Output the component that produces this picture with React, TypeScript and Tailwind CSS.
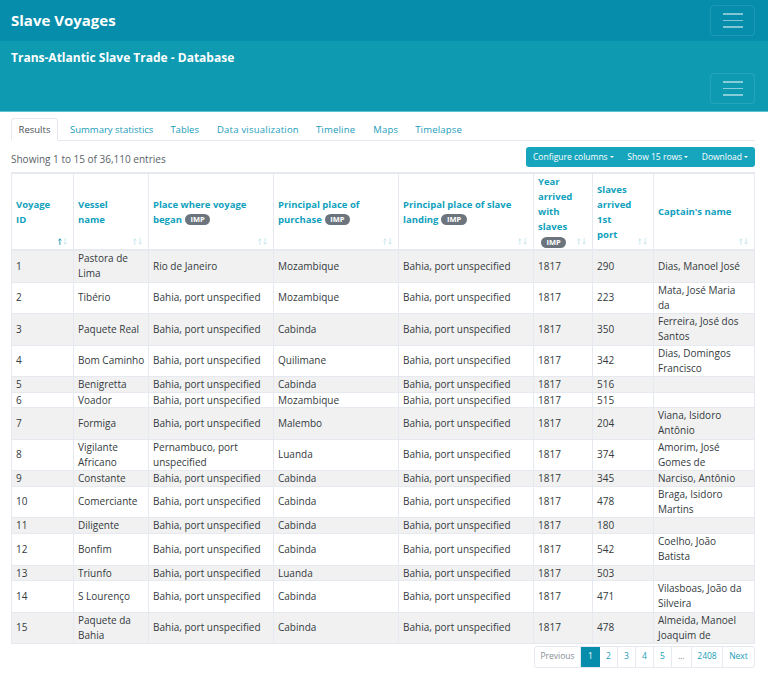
const rows = [
  { id: 1, vessel: 'Pastora de Lima', began: 'Rio de Janeiro', purchase: 'Mozambique', arrived: 290, captain: 'Dias, Manoel José', h: 'h-[32px]' },
  { id: 2, vessel: 'Tibério', began: 'Bahia, port unspecified', purchase: 'Mozambique', arrived: 223, captain: 'Mata, José Maria da', h: 'h-[31px]' },
  { id: 3, vessel: 'Paquete Real', began: 'Bahia, port unspecified', purchase: 'Cabinda', arrived: 350, captain: 'Ferreira, José dos Santos', h: 'h-[32px]' },
  { id: 4, vessel: 'Bom Caminho', began: 'Bahia, port unspecified', purchase: 'Quilimane', arrived: 342, captain: 'Dias, Domingos Francisco', h: 'h-[31px]' },
  { id: 5, vessel: 'Benigretta', began: 'Bahia, port unspecified', purchase: 'Cabinda', arrived: 516, captain: '', h: 'h-[16px]', single: true },
  { id: 6, vessel: 'Voador', began: 'Bahia, port unspecified', purchase: 'Mozambique', arrived: 515, captain: '', h: 'h-[15px]', single: true },
  { id: 7, vessel: 'Formiga', began: 'Bahia, port unspecified', purchase: 'Malembo', arrived: 204, captain: 'Viana, Isidoro Antônio', h: 'h-[32px]' },
  { id: 8, vessel: 'Vigilante Africano', began: 'Pernambuco, port unspecified', purchase: 'Luanda', arrived: 374, captain: 'Amorim, José Gomes de', h: 'h-[31px]' },
  { id: 9, vessel: 'Constante', began: 'Bahia, port unspecified', purchase: 'Cabinda', arrived: 345, captain: 'Narciso, Antônio', h: 'h-[16px]', single: true },
  { id: 10, vessel: 'Comerciante', began: 'Bahia, port unspecified', purchase: 'Cabinda', arrived: 478, captain: 'Braga, Isidoro Martins', h: 'h-[31px]' },
  { id: 11, vessel: 'Diligente', began: 'Bahia, port unspecified', purchase: 'Cabinda', arrived: 180, captain: '', h: 'h-[16px]', single: true },
  { id: 12, vessel: 'Bonfim', began: 'Bahia, port unspecified', purchase: 'Cabinda', arrived: 542, captain: 'Coelho, João Batista', h: 'h-[32px]' },
  { id: 13, vessel: 'Triunfo', began: 'Bahia, port unspecified', purchase: 'Luanda', arrived: 503, captain: '', h: 'h-[15px]', single: true },
  { id: 14, vessel: 'S Lourenço', began: 'Bahia, port unspecified', purchase: 'Cabinda', arrived: 471, captain: 'Vilasboas, João da Silveira', h: 'h-[32px]' },
  { id: 15, vessel: 'Paquete da Bahia', began: 'Bahia, port unspecified', purchase: 'Cabinda', arrived: 478, captain: 'Almeida, Manoel Joaquim de', h: 'h-[31px]' },
];

const tabs = [
  { label: 'Summary statistics', cls: 'ml-[12px]' },
  { label: 'Tables', cls: 'ml-[17px]' },
  { label: 'Data visualization', cls: 'ml-[18px] tracking-[0.22px]' },
  { label: 'Timeline', cls: 'ml-[17px] tracking-[0.2px]' },
  { label: 'Maps', cls: 'ml-[18px] tracking-[0.2px]' },
  { label: 'Timelapse', cls: 'ml-[17px] tracking-[0.2px]' },
];

const headers = [
  { label: 'Voyage\nID', imp: false, w: 'w-[62px]', active: true },
  { label: 'Vessel\nname', imp: false, w: 'w-[75px]' },
  { label: 'Place where voyage\nbegan', imp: true, w: 'w-[125px]' },
  { label: 'Principal place of\npurchase', imp: true, w: 'w-[125px]' },
  { label: 'Principal place of slave\nlanding', imp: true, w: 'w-[135px]' },
  { label: 'Year\narrived\nwith\nslaves\n', imp: true, w: 'w-[59px]' },
  { label: 'Slaves\narrived\n1st\nport', imp: false, w: 'w-[61px]' },
  { label: "Captain's name", imp: false, w: 'w-[101px]' },
];

function Burger() {
  return (
    <button className="flex h-[31px] w-[45px] flex-col items-center justify-center gap-[5px] rounded border border-white/10">
      <span className="h-[1.5px] w-[20px] bg-white/50" />
      <span className="h-[1.5px] w-[20px] bg-white/50" />
      <span className="h-[1.5px] w-[20px] bg-white/50" />
    </button>
  );
}

function SortIcon({ active }: { active?: boolean }) {
  return (
    <svg viewBox="0 0 12 8" className="absolute bottom-[4px] right-[5px] h-[7px] w-[11px]" fill="none" strokeWidth="1">
      <path d="M3 8V1M1.2 2.8 3 1l1.8 1.8" stroke={active ? '#0f8fab' : '#c3e3ea'} />
      <path d="M9 0v7M7.2 5.2 9 7l1.8-1.8" stroke="#c3e3ea" />
    </svg>
  );
}

function Caret() {
  return <span className="ml-[2px] inline-block border-x-[2px] border-t-[2px] border-x-transparent border-t-white align-middle" />;
}

function ImpBadge() {
  return <span className="ml-[3px] inline-block rounded-full bg-[#6c757d] px-[5.5px] align-middle text-[7.5px] leading-[11px] font-bold text-white">IMP</span>;
}

export default function App() {
  return (
    <div className="h-[681px] w-[768px] overflow-hidden bg-white font-['Open_Sans',sans-serif] text-[10px] text-[#343a40]">
      {/* Top nav */}
      <div className="flex h-[41px] items-center justify-between bg-[#058dab] pl-[11px] pr-[13px]">
        <span className="text-[15px] font-bold text-white">Slave Voyages</span>
        <Burger />
      </div>

      {/* Sub nav */}
      <div className="h-[71px] border-b border-[#5cc0d0] bg-[#0e9bb2] pl-[11px] pr-[13px] pt-[8px]">
        <div className="text-[12px] leading-[18px] font-bold text-white">Trans-Atlantic Slave Trade - Database</div>
        <div className="mt-[6px] flex justify-end">
          <Burger />
        </div>
      </div>

      <div className="px-[11px]">
        {/* Tabs */}
        <div className="mt-[6px] mr-[2px] flex h-[23px] items-center border-b border-[#e6e9ef] pt-[2px] text-[9.5px] text-[#1a9dba]">
          <span className="-mt-[2px] flex h-[23px] w-[47px] items-center justify-center rounded-t border border-b-white border-[#e6e9ef] pt-[2px] text-[#495057]">Results</span>
          {tabs.map((tab) => (
            <span key={tab.label} className={tab.cls}>{tab.label}</span>
          ))}
        </div>

        {/* Info + buttons */}
        <div className="mr-[2px] mt-[6px] flex h-[20px] items-center justify-between">
          <span className="pt-[4px] text-[#5a6268]">Showing 1 to 15 of 36,110 entries</span>
          <div className="flex h-[20px] w-[229px] items-center justify-between rounded-[3px] bg-[#16a5bd] px-[7px] text-[8.5px] text-white">
            <span>Configure columns<Caret /></span>
            <span>Show 15 rows<Caret /></span>
            <span>Download<Caret /></span>
          </div>
        </div>

        {/* Table */}
        <table className="mt-[5px] w-[743px] table-fixed border-collapse border-t-2 border-[#e6e9ef]">
          <thead>
            <tr className="h-[75px]">
              {headers.map((h) => (
                <th key={h.label} className={`${h.w} relative border border-b-2 border-[#e6e9ef] pl-[4px] pr-[3px] text-left align-middle text-[9.5px] leading-[15px] font-bold whitespace-pre-line text-[#109fbd]`}>
                  {h.label}
                  {h.imp && <ImpBadge />}
                  <SortIcon active={h.active} />
                </th>
              ))}
            </tr>
          </thead>
          <tbody>
            {rows.map((r) => {
              const cell = r.single
                ? 'border border-[#e6e9ef] pl-[4px] pr-[2px] py-0 leading-[14px]'
                : 'border border-[#e6e9ef] pl-[4px] pr-[2px] py-0 leading-[15px]';
              const captainCell = r.single
                ? 'border border-[#e6e9ef] pl-[4px] pr-[12px] py-0 leading-[14px]'
                : 'border border-[#e6e9ef] pl-[4px] pr-[12px] py-0 leading-[15px]';
              return (
                <tr key={r.id} className={`${r.h} ${r.id % 2 === 1 ? 'bg-[#f1f1f1]' : 'bg-white'}`}>
                  <td className={cell}>{r.id}</td>
                  <td className={cell}>{r.vessel}</td>
                  <td className={cell}>{r.began}</td>
                  <td className={cell}>{r.purchase}</td>
                  <td className={cell}>Bahia, port unspecified</td>
                  <td className={cell}>1817</td>
                  <td className={cell}>{r.arrived}</td>
                  <td className={captainCell}>{r.captain}</td>
                </tr>
              );
            })}
          </tbody>
        </table>

        {/* Pagination */}
        <div className="mr-[2px] mt-[2px] flex justify-end">
          <div className="flex h-[22px] items-center rounded-[3px] border border-[#e6e9ef] text-[8.5px] text-[#1a9dba]">
            <span className="flex h-full w-[46px] items-center justify-center border-r border-[#e6e9ef] text-[#868e96]">Previous</span>
            <span className="flex h-full w-[19px] items-center justify-center bg-[#058dab] text-white">1</span>
            <span className="flex h-full w-[18px] items-center justify-center border-r border-[#e6e9ef]">2</span>
            <span className="flex h-full w-[18px] items-center justify-center border-r border-[#e6e9ef]">3</span>
            <span className="flex h-full w-[18px] items-center justify-center border-r border-[#e6e9ef]">4</span>
            <span className="flex h-full w-[18px] items-center justify-center border-r border-[#e6e9ef]">5</span>
            <span className="flex h-full w-[20px] items-center justify-center border-r border-[#e6e9ef] text-[#868e96]">...</span>
            <span className="flex h-full w-[31px] items-center justify-center border-r border-[#e6e9ef]">2408</span>
            <span className="flex h-full w-[31px] items-center justify-center">Next</span>
          </div>
        </div>
      </div>
    </div>
  );
}
